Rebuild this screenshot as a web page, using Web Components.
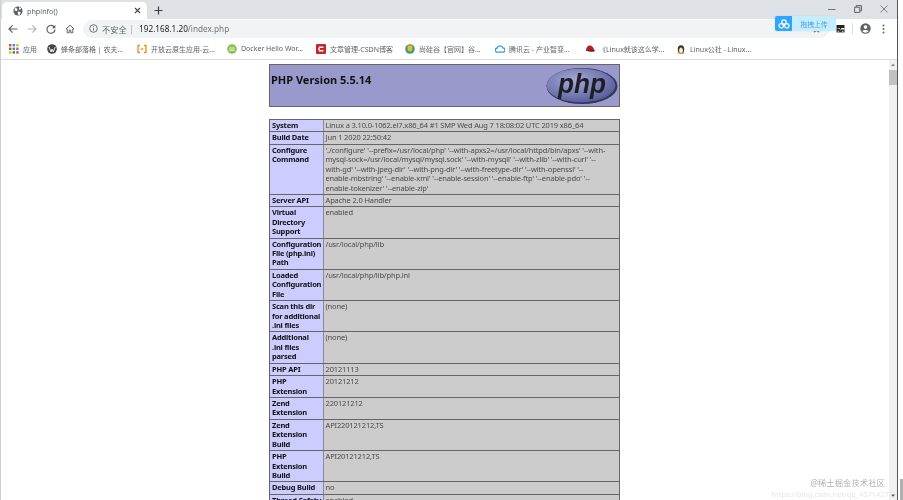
<!DOCTYPE html>
<html lang="zh">
<head>
<meta charset="utf-8">
<title>phpinfo()</title>
<style>
  html, body { margin: 0; padding: 0; height: 500px; overflow: hidden; background: #fff; }
  body { font-family: "Noto Sans", "Noto Sans CJK SC", sans-serif; }
</style>
</head>
<body>
<browser-window>
  <tab-strip slot="tabs" label="phpinfo()"></tab-strip>
  <nav-toolbar slot="toolbar" warning="不安全" host-part="192.168.1.20" path-part="/index.php"></nav-toolbar>
  <bookmark-bar slot="bookmarks">
    <bookmark-item width="38" icon="apps" label="应用"></bookmark-item>
    <bookmark-item width="90" icon="wp" label="蜂条部落格 | 农夫..."></bookmark-item>
    <bookmark-item width="90" icon="code" label="开放云原生应用-云..."></bookmark-item>
    <bookmark-item width="89" icon="docker" label="Docker Hello Wor..."></bookmark-item>
    <bookmark-item width="89" icon="csdn" label="文章管理-CSDN博客"></bookmark-item>
    <bookmark-item width="90" icon="guigu" label="尚硅谷【官网】谷..."></bookmark-item>
    <bookmark-item width="90" icon="cloud" label="腾讯云 - 产业智变..."></bookmark-item>
    <bookmark-item width="91" icon="hat" label="《Linux就该这么学..."></bookmark-item>
    <bookmark-item width="80" icon="tux" label="Linux公社 - Linux..."></bookmark-item>
  </bookmark-bar>
  <page-view slot="page">
    <php-header version="PHP Version 5.5.14"></php-header>
    <php-table>
      <info-row label="System" value="Linux a 3.10.0-1062.el7.x86_64 #1 SMP Wed Aug 7 18:08:02 UTC 2019 x86_64"></info-row>
      <info-row label="Build Date" value="Jun 1 2020 22:50:42"></info-row>
      <info-row label="Configure|Command" value="'./configure' '--prefix=/usr/local/php' '--with-apxs2=/usr/local/httpd/bin/apxs' '--with-|mysql-sock=/usr/local/mysql/mysql.sock' '--with-mysqli' '--with-zlib' '--with-curl' '--|with-gd' '--with-jpeg-dir' '--with-png-dir' '--with-freetype-dir' '--with-openssl' '--|enable-mbstring' '--enable-xml' '--enable-session' '--enable-ftp' '--enable-pdo' '--|enable-tokenizer' '--enable-zip'"></info-row>
      <info-row label="Server API" value="Apache 2.0 Handler"></info-row>
      <info-row label="Virtual|Directory|Support" value="enabled"></info-row>
      <info-row label="Configuration|File (php.ini)|Path" value="/usr/local/php/lib"></info-row>
      <info-row label="Loaded|Configuration|File" value="/usr/local/php/lib/php.ini"></info-row>
      <info-row label="Scan this dir|for additional|.ini files" value="(none)"></info-row>
      <info-row label="Additional|.ini files|parsed" value="(none)"></info-row>
      <info-row label="PHP API" value="20121113"></info-row>
      <info-row label="PHP|Extension" value="20121212"></info-row>
      <info-row label="Zend|Extension" value="220121212"></info-row>
      <info-row label="Zend|Extension|Build" value="API220121212,TS"></info-row>
      <info-row label="PHP|Extension|Build" value="API20121212,TS"></info-row>
      <info-row label="Debug Build" value="no"></info-row>
      <info-row label="Thread Safety" value="enabled"></info-row>
    </php-table>
  </page-view>
</browser-window>
<upload-badge label="拖拽上传"></upload-badge>
<page-watermark></page-watermark>

<script>
class BrowserWindow extends HTMLElement {
  constructor() {
    super();
    this.attachShadow( {mode: 'open'} ).innerHTML = /* template */ `
      <style>
        :host {
          box-sizing: border-box;
          border-left: 1px solid #cfcfcf;
          border-right: 1.5px solid #555;
          display: flex;
          filter: blur( 0.35px );
          flex-direction: column;
          height: 500px;
          overflow: hidden;
          width: 898px;
        }
      </style>
      <slot name="tabs"></slot>
      <slot name="toolbar"></slot>
      <slot name="bookmarks"></slot>
      <slot name="page"></slot>
    `;
  }
}

class TabStrip extends HTMLElement {
  constructor() {
    super();
    this.attachShadow( {mode: 'open'} ).innerHTML = /* template */ `
      <style>
        :host {
          align-items: flex-end;
          background: #dee1e6;
          box-sizing: border-box;
          display: flex;
          flex: none;
          height: 19px;
          padding-left: 1px;
        }
        .tab {
          align-items: center;
          background: #fff;
          border-radius: 5px 5px 0 0;
          box-sizing: border-box;
          color: #5f6368;
          display: flex;
          font-size: 7.2px;
          height: 17px;
          padding: 0 6px 0 11px;
          width: 145px;
        }
        .label { flex: 1; margin-left: 4px; }
        .add { height: 9px; margin: 0 0 4px 7px; width: 9px; }
        .controls { align-items: center; display: flex; gap: 18px; margin: 0 9px 6px auto; }
      </style>
      <div class="tab">
        <svg width="10" height="10" viewBox="0 0 10 10">
          <circle cx="5" cy="5" r="4.6" fill="#5f6368"/>
          <path d="M2 2l2 .6 .6 1.6-1 .8-2-.6zM6 1.2l2 1-.4 1.4-1.6-.2zM5 5.4l2.6.6-.6 2.4-1.4.8-.8-2z" fill="#fff"/>
        </svg>
        <span class="label"></span>
        <svg width="7" height="7" viewBox="0 0 7 7"><path d="M1 1l5 5M6 1l-5 5" stroke="#444" stroke-width="1.1"/></svg>
      </div>
      <svg class="add" viewBox="0 0 9 9"><path d="M4.5 .5v8M.5 4.5h8" stroke="#3c4043" stroke-width="1.2"/></svg>
      <div class="controls">
        <svg width="8" height="8" viewBox="0 0 8 8"><path d="M0 4.5h7.5" stroke="#666" stroke-width=".9"/></svg>
        <svg width="8" height="8" viewBox="0 0 8 8"><path d="M.6 2.2h5.2v5.2H.6zM2.2 2V.6h5.2v5.2H6" fill="none" stroke="#555" stroke-width=".9"/></svg>
        <svg width="8" height="8" viewBox="0 0 8 8"><path d="M.5 .5l7 7M7.5 .5l-7 7" stroke="#777" stroke-width=".9"/></svg>
      </div>
    `;
    this.shadowRoot.querySelector( '.label' ).textContent = this.getAttribute( 'label' );
  }
}

class NavToolbar extends HTMLElement {
  constructor() {
    super();
    this.attachShadow( {mode: 'open'} ).innerHTML = /* template */ `
      <style>
        :host {
          align-items: center;
          background: #fff;
          box-sizing: border-box;
          display: flex;
          flex: none;
          height: 19px;
          padding-left: 7px;
        }
        .nav { align-items: center; display: flex; gap: 9px; }
        .omni {
          align-items: center;
          background: #f1f3f4;
          border-radius: 9px;
          box-sizing: border-box;
          display: flex;
          font-size: 8.2px;
          height: 18px;
          margin-left: 8px;
          padding: 0 8px 0 6px;
          width: 746px;
        }
        .warn { color: #5f6368; margin-left: 4px; }
        .sep { color: #9a9ea3; margin: 0 5px 0 3px; }
        .host { color: #202124; }
        .path { color: #70757a; }
        .star { margin-left: auto; }
        .right { align-items: center; display: flex; margin-left: 7px; }
        .divider { background: #dadce0; height: 11px; margin: 0 7px 0 7px; width: 1px; }
      </style>
      <div class="nav">
        <svg width="10" height="10" viewBox="0 0 10 10"><path d="M9.5 5H1.2M4.6 1.4L1 5l3.6 3.6" fill="none" stroke="#5f6368" stroke-width="1.2"/></svg>
        <svg width="10" height="10" viewBox="0 0 10 10"><path d="M.5 5h8.3M5.4 1.4L9 5 5.4 8.6" fill="none" stroke="#b5b8bc" stroke-width="1.2"/></svg>
        <svg width="10" height="10" viewBox="0 0 10 10"><path d="M8.4 3.2A4 4 0 1 0 9 5.4" fill="none" stroke="#5f6368" stroke-width="1.2"/><path d="M9.4 .8v3.4H6z" fill="#5f6368"/></svg>
        <svg width="10" height="10" viewBox="0 0 10 10"><path d="M5 1.2L1 4.8h1.2v4h2v-2.6h1.6v2.6h2v-4H9z" fill="none" stroke="#5f6368" stroke-width="1"/></svg>
      </div>
      <div class="omni">
        <svg width="9" height="9" viewBox="0 0 9 9"><circle cx="4.5" cy="4.5" r="3.8" fill="none" stroke="#5f6368" stroke-width=".9"/><path d="M4.5 4v2.6M4.5 2.2v1" stroke="#5f6368" stroke-width=".9"/></svg>
        <span class="warn"></span><span class="sep">|</span><span class="host"></span><span class="path"></span>
        <svg class="star" width="9" height="9" viewBox="0 0 9 9"><path d="M4.5 .8l1.1 2.5 2.7.3-2 1.8.6 2.7-2.4-1.4-2.4 1.4.6-2.7-2-1.8 2.7-.3z" fill="none" stroke="#5f6368" stroke-width=".9"/></svg>
      </div>
      <div class="right">
        <svg width="9" height="9" viewBox="0 0 9 9"><path d="M.5 1h8v7.4h-8z" fill="#222"/><path d="M.5 4h3.4v2.2h1.2V4h3.4v1.4H5.4M1.6 6.8h1.6v1H1.6zM5.8 6.8h1.6v1H5.8z" fill="#eee"/></svg>
        <div class="divider"></div>
        <svg width="11" height="11" viewBox="0 0 11 11"><circle cx="5.5" cy="5.5" r="5.2" fill="#5f6368"/><circle cx="5.5" cy="4.1" r="1.8" fill="#fff"/><path d="M2.3 8.1c1-1.5 5.4-1.5 6.4 0-1 1.1-2 1.6-3.2 1.6s-2.2-.5-3.2-1.6z" fill="#fff"/></svg>
        <svg style="margin-left:11px" width="3" height="10" viewBox="0 0 3 10"><circle cx="1.5" cy="1.5" r="1" fill="#5f6368"/><circle cx="1.5" cy="5" r="1" fill="#5f6368"/><circle cx="1.5" cy="8.5" r="1" fill="#5f6368"/></svg>
      </div>
    `;
    this.shadowRoot.querySelector( '.warn' ).textContent = this.getAttribute( 'warning' );
    this.shadowRoot.querySelector( '.host' ).textContent = this.getAttribute( 'host-part' );
    this.shadowRoot.querySelector( '.path' ).textContent = this.getAttribute( 'path-part' );
  }
}

class BookmarkBar extends HTMLElement {
  constructor() {
    super();
    this.attachShadow( {mode: 'open'} ).innerHTML = /* template */ `
      <style>
        :host {
          align-items: center;
          background: #fff;
          border-bottom: 1px solid #dcdcdc;
          box-sizing: border-box;
          display: flex;
          flex: none;
          height: 22px;
          padding-left: 8px;
        }
      </style>
      <slot></slot>
    `;
  }
}

const BOOKMARK_ICONS = {
  apps: '<g fill="#e0483e"><rect x="0" y="0" width="2.4" height="2.4"/></g><rect x="3.6" y="0" width="2.4" height="2.4" fill="#4285f4"/><rect x="7.2" y="0" width="2.4" height="2.4" fill="#f4b400"/><rect x="0" y="3.6" width="2.4" height="2.4" fill="#0f9d58"/><rect x="3.6" y="3.6" width="2.4" height="2.4" fill="#e0483e"/><rect x="7.2" y="3.6" width="2.4" height="2.4" fill="#4285f4"/><rect x="0" y="7.2" width="2.4" height="2.4" fill="#f4b400"/><rect x="3.6" y="7.2" width="2.4" height="2.4" fill="#0f9d58"/><rect x="7.2" y="7.2" width="2.4" height="2.4" fill="#e0483e"/>',
  wp: '<circle cx="5" cy="5" r="4.8" fill="#444"/><path d="M2 3l2 5 1-3 1.2 3 2-5" fill="none" stroke="#fff" stroke-width=".9"/>',
  code: '<path d="M3 1.5H1v7h2M7 1.5h2v7H7" fill="none" stroke="#f08a24" stroke-width="1.3"/><path d="M3.6 5h2.8" stroke="#f08a24" stroke-width="1.3"/>',
  docker: '<circle cx="5" cy="5" r="4.8" fill="#8cc152"/><rect x="2" y="3.4" width="6" height="3.4" rx="1" fill="#e8f3d6"/><path d="M2 5h6" stroke="#6a9f3a" stroke-width=".7"/>',
  csdn: '<rect width="10" height="10" rx="1" fill="#c9252d"/><path d="M7.4 3.2H3.6L2.8 5l.8 1.8h3.8" fill="none" stroke="#fff" stroke-width="1.4"/>',
  guigu: '<circle cx="5" cy="5" r="4.8" fill="#3f9d7a"/><path d="M2.6 1.4h4.8v3.6a2.4 2.4 0 0 1-4.8 0z" fill="#f2b632"/>',
  cloud: '<path d="M2.6 8.2a2.1 2.1 0 0 1-.3-4.2 2.9 2.9 0 0 1 5.5-.2 2.2 2.2 0 0 1-.1 4.4z" fill="none" stroke="#2f9fe8" stroke-width="1.3"/>',
  hat: '<path d="M1 6.4c0-3 1.6-5 3.8-5S8.6 3.4 9 5.6l1 1.2c-.6 1-2.6 1.2-4.4.8S2 6.8 1 6.4z" fill="#b52025"/><path d="M1 6.4c2 .2 5 1.2 8 .2" stroke="#222" stroke-width=".7" fill="none"/>',
  tux: '<ellipse cx="5" cy="5.4" rx="3.2" ry="4.2" fill="#333"/><ellipse cx="5" cy="6.4" rx="2" ry="2.6" fill="#f4f1e4"/><path d="M1.6 8.4h2.6v1.4H1.4zM5.8 8.4h2.6l.2 1.4H5.8z" fill="#eba91e"/><path d="M4.2 3h1.6L5 4z" fill="#eba91e"/>'
};

class BookmarkItem extends HTMLElement {
  constructor() {
    super();
    this.attachShadow( {mode: 'open'} ).innerHTML = /* template */ `
      <style>
        :host {
          align-items: center;
          box-sizing: border-box;
          color: #5f6368;
          display: flex;
          flex: none;
          font-size: 7px;
          gap: 4px;
          white-space: nowrap;
        }
        svg { flex: none; }
      </style>
      <svg width="10" height="10" viewBox="0 0 10 10">${BOOKMARK_ICONS[this.getAttribute( 'icon' )]}</svg>
      <span></span>
    `;
    this.style.width = this.getAttribute( 'width' ) + 'px';
    this.shadowRoot.querySelector( 'span' ).textContent = this.getAttribute( 'label' );
  }
}

class PageView extends HTMLElement {
  constructor() {
    super();
    this.attachShadow( {mode: 'open'} ).innerHTML = /* template */ `
      <style>
        :host {
          background: #fff;
          display: flex;
          flex: 1;
          min-height: 0;
        }
        .content {
          align-items: center;
          display: flex;
          flex: 1;
          flex-direction: column;
          gap: 12px;
          overflow: hidden;
          padding: 4px 1px 0 0;
        }
        .track {
          background: #f1f1f1;
          display: flex;
          flex: none;
          flex-direction: column;
          width: 8px;
        }
        .arrow { flex: none; height: 10px; text-align: center; }
        .thumb { background: #c1c1c1; flex: none; height: 15px; }
        .rest { flex: 1; }
      </style>
      <div class="content"><slot></slot></div>
      <div class="track">
        <svg class="arrow" viewBox="0 0 8 10"><path d="M4 3.4L6 6H2z" fill="#888"/></svg>
        <div class="thumb"></div>
        <div class="rest"></div>
        <svg class="arrow" viewBox="0 0 8 10"><path d="M4 7L6 4.4H2z" fill="#555"/></svg>
      </div>
    `;
  }
}

class PhpHeader extends HTMLElement {
  constructor() {
    super();
    this.attachShadow( {mode: 'open'} ).innerHTML = /* template */ `
      <style>
        :host {
          align-items: flex-start;
          background: #9999cc;
          border: 1px solid #666;
          box-sizing: border-box;
          display: flex;
          flex: none;
          height: 43px;
          justify-content: space-between;
          padding: 1px 1px 0 1px;
          width: 351px;
        }
        h1 {
          color: #111;
          font-family: "Noto Sans", sans-serif;
          font-size: 11px;
          font-weight: 700;
          line-height: 14px;
          margin: 7px 0 0;
        }
        svg { flex: none; }
      </style>
      <h1></h1>
      <svg width="72" height="39" viewBox="0 0 72 39">
        <defs>
          <radialGradient id="g" cx="0.4" cy="0.35" r="0.7">
            <stop offset="0" stop-color="#a4a8d4"/>
            <stop offset="0.7" stop-color="#6f74ad"/>
            <stop offset="1" stop-color="#53588f"/>
          </radialGradient>
        </defs>
        <ellipse cx="36" cy="20" rx="35.5" ry="18" fill="#34355a"/>
        <ellipse cx="35" cy="19.4" rx="34.4" ry="17" fill="url(#g)"/>
        <text x="36" y="27" text-anchor="middle" font-family="'Liberation Sans', sans-serif" font-size="27" font-weight="700" font-style="italic" fill="#1d1e26" textLength="48" lengthAdjust="spacingAndGlyphs">php</text>
      </svg>
    `;
    this.shadowRoot.querySelector( 'h1' ).textContent = this.getAttribute( 'version' );
  }
}

class PhpTable extends HTMLElement {
  constructor() {
    super();
    this.attachShadow( {mode: 'open'} ).innerHTML = /* template */ `
      <style>
        :host {
          border: 1px solid #666;
          border-bottom: 0;
          box-sizing: border-box;
          display: flex;
          flex: none;
          flex-direction: column;
          width: 351px;
        }
      </style>
      <slot></slot>
    `;
  }
}

class InfoRow extends HTMLElement {
  constructor() {
    super();
    this.attachShadow( {mode: 'open'} ).innerHTML = /* template */ `
      <style>
        :host {
          border-bottom: 1px solid #666;
          box-sizing: border-box;
          display: grid;
          font-family: "Noto Sans", sans-serif;
          font-size: 7.5px;
          grid-template-columns: 53.5px minmax( 0, 1fr );
          line-height: 9.42px;
        }
        .e {
          background: #ccccff;
          border-right: 1.5px solid #8a8a9a;
          box-sizing: border-box;
          color: #111;
          font-weight: 700;
          letter-spacing: -0.2px;
          padding: 1px 0 1px 2px;
          white-space: nowrap;
        }
        .v {
          background: #cccccc;
          color: #4a4a4a;
          letter-spacing: -0.15px;
          overflow: hidden;
          padding: 1px 0 1px 2px;
          white-space: nowrap;
        }
      </style>
      <div class="e"></div>
      <div class="v"></div>
    `;
    this._fill( '.e', this.getAttribute( 'label' ) );
    this._fill( '.v', this.getAttribute( 'value' ) );
  }

  // Hard breaks keep the wrapping of the page
  _fill( selector, text ) {
    const cell = this.shadowRoot.querySelector( selector );

    text.split( '|' ).forEach( ( line, index ) => {
      if( index > 0 ) cell.appendChild( document.createElement( 'br' ) );
      cell.appendChild( document.createTextNode( line ) );
    } );
  }
}

class UploadBadge extends HTMLElement {
  constructor() {
    super();
    this.attachShadow( {mode: 'open'} ).innerHTML = /* template */ `
      <style>
        :host {
          border-radius: 2px;
          box-shadow: 0 0 1px #7fcfff;
          display: flex;
          filter: blur( 0.3px );
          font-size: 6.8px;
          height: 15px;
          left: 775px;
          overflow: hidden;
          position: absolute;
          top: 16px;
          width: 61px;
        }
        .icon { align-items: center; background: #2ea6ff; display: flex; flex: none; justify-content: center; width: 17px; }
        .text { align-items: center; background: #c6edff; color: #4aa3dc; display: flex; flex: 1; justify-content: center; }
      </style>
      <div class="icon">
        <svg width="12" height="10" viewBox="0 0 12 10"><circle cx="6" cy="3" r="2.2" fill="none" stroke="#fff" stroke-width="1.2"/><circle cx="3.2" cy="6.8" r="2.2" fill="none" stroke="#fff" stroke-width="1.2"/><circle cx="8.8" cy="6.8" r="2.2" fill="none" stroke="#fff" stroke-width="1.2"/></svg>
      </div>
      <div class="text"></div>
    `;
    this.shadowRoot.querySelector( '.text' ).textContent = this.getAttribute( 'label' );
  }
}

class PageWatermark extends HTMLElement {
  constructor() {
    super();
    this.attachShadow( {mode: 'open'} ).innerHTML = /* template */ `
      <style>
        :host {
          align-items: flex-end;
          bottom: 0;
          display: flex;
          filter: blur( 0.4px );
          flex-direction: column;
          position: absolute;
          right: 10px;
        }
        .a { color: #b4b4b4; font-size: 8.4px; line-height: 12px; margin-right: 8px; }
        .b { color: #e6e6e6; font-size: 7.4px; line-height: 11px; }
        .edge { background: #b0b0b0; bottom: 0; height: 21px; position: absolute; right: -10px; width: 3px; }
      </style>
      <div class="a">@稀土掘金技术社区</div>
      <div class="b">https://blog.csdn.net/qq_45714272</div>
      <div class="edge"></div>
    `;
  }
}

window.customElements.define( 'browser-window', BrowserWindow );
window.customElements.define( 'tab-strip', TabStrip );
window.customElements.define( 'nav-toolbar', NavToolbar );
window.customElements.define( 'bookmark-bar', BookmarkBar );
window.customElements.define( 'bookmark-item', BookmarkItem );
window.customElements.define( 'page-view', PageView );
window.customElements.define( 'php-header', PhpHeader );
window.customElements.define( 'php-table', PhpTable );
window.customElements.define( 'info-row', InfoRow );
window.customElements.define( 'upload-badge', UploadBadge );
window.customElements.define( 'page-watermark', PageWatermark );
</script>
</body>
</html>
